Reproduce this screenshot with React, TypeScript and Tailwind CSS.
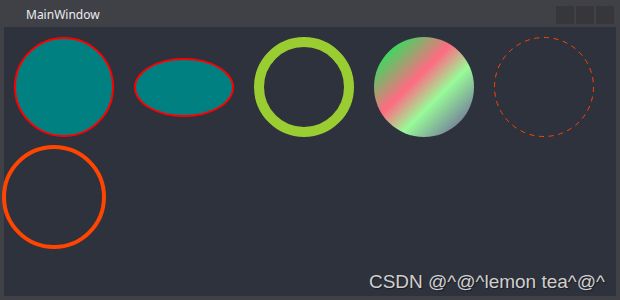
export default function App() {
  return (
    <div className="w-[620px] h-[300px] bg-[#404146] px-[4px] pb-[4px] flex flex-col">
      {/* Title bar */}
      <div className="h-[27px] flex items-start justify-between shrink-0">
        <span className="ml-[22px] mt-[6px] text-[12px] leading-[18px] text-[#ecedf2] font-['Noto_Sans',sans-serif]">
          MainWindow
        </span>
        <div className="flex gap-[2px] mt-[6px] mr-[2px]">
          <div className="w-[18px] h-[18px] bg-[#36363b]" />
          <div className="w-[18px] h-[18px] bg-[#36363b]" />
          <div className="w-[18px] h-[18px] bg-[#36363b]" />
        </div>
      </div>

      {/* Content */}
      <div className="relative flex-1 bg-[#2e323d] pt-[10px]">
        <div className="flex items-center gap-[20px] pl-[10px]">
          <div className="w-[100px] h-[100px] rounded-full bg-[#008080] border-2 border-[#ff0000]" />
          <div className="w-[100px] h-[59px] rounded-[50%] bg-[#008080] border-2 border-[#ff0000]" />
          <div className="w-[100px] h-[100px] rounded-full border-[10px] border-[#9acd32]" />
          <div className="w-[100px] h-[100px] rounded-full bg-[linear-gradient(135deg,#2ee45c_0%,#3cd95f_14%,#ff6b81_42%,#98fb98_62%,#778899_86%)]" />
          <svg width="100" height="100" viewBox="0 0 100 100">
            <circle cx="50" cy="50" r="49.5" fill="none" stroke="#ff4500" strokeWidth="1" strokeDasharray="5 4.7" />
          </svg>
        </div>
        <div className="mt-[8px] ml-[-2px]">
          <div className="w-[104px] h-[104px] rounded-full border-4 border-[#ff4500]" />
        </div>

        <span className="absolute right-[11px] bottom-[3px] text-[19px] leading-[22px] text-[#cfcfcf] font-['Liberation_Sans',Arial,sans-serif] [text-shadow:1px_1px_1px_#1a1c22]">
          CSDN @^@^lemon tea^@^
        </span>
      </div>
    </div>
  );
}
